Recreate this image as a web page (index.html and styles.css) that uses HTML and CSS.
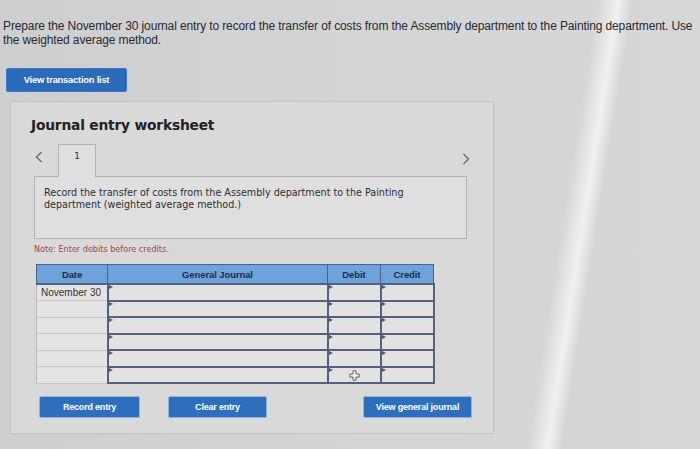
FILE: index.html
```html
<!DOCTYPE html>
<html lang="en">
<head>
<meta charset="utf-8">
<title>Journal entry worksheet</title>
<link rel="stylesheet" href="styles.css">
</head>
<body>
<p class="prompt">Prepare the November 30 journal entry to record the transfer of costs from the Assembly department to the Painting department. Use the weighted average method.</p>
<button class="btn btn-list">View transaction list</button>
<section class="panel">
  <h2 class="title">Journal entry worksheet</h2>
  <div class="tabs">
    <svg class="chev" width="8" height="12" viewBox="0 0 8 12"><path d="M6.5 1 L1.5 6 L6.5 11" fill="none" stroke="#6b6b6b" stroke-width="1.3"/></svg>
    <div class="tab">1</div>
    <svg class="chev chev-right" width="8" height="12" viewBox="0 0 8 12"><path d="M1.5 1 L6.5 6 L1.5 11" fill="none" stroke="#6b6b6b" stroke-width="1.3"/></svg>
  </div>
  <div class="desc">Record the transfer of costs from the Assembly department to the Painting department (weighted average method.)</div>
  <p class="note">Note: Enter debits before credits.</p>
  <table class="journal">
    <thead>
      <tr><th class="c-date">Date</th><th class="c-gj">General Journal</th><th class="c-dr">Debit</th><th class="c-cr">Credit</th></tr>
    </thead>
    <tbody>
      <tr><td class="date">November 30</td><td class="in"></td><td class="in"></td><td class="in"></td></tr>
      <tr><td class="date"></td><td class="in"></td><td class="in"></td><td class="in"></td></tr>
      <tr><td class="date"></td><td class="in"></td><td class="in"></td><td class="in"></td></tr>
      <tr><td class="date"></td><td class="in"></td><td class="in"></td><td class="in"></td></tr>
      <tr><td class="date"></td><td class="in"></td><td class="in"></td><td class="in"></td></tr>
      <tr><td class="date"></td><td class="in"></td><td class="in plus-cell"><svg class="plus" width="11" height="11" viewBox="0 0 11 11"><path d="M4 0.8 H7 V4 H10.2 V7 H7 V10.2 H4 V7 H0.8 V4 H4 Z" fill="#f2f2f2" stroke="#555" stroke-width="0.9"/></svg></td><td class="in"></td></tr>
    </tbody>
  </table>
  <div class="actions">
    <button class="btn btn-record">Record entry</button>
    <button class="btn btn-clear">Clear entry</button>
    <button class="btn btn-view">View general journal</button>
  </div>
</section>
</body>
</html>
```
FILE: styles.css
```css
html, body {
  margin: 0;
  padding: 0;
}
body {
  width: 700px;
  height: 449px;
  overflow: hidden;
  background-color: #d1d2d4;
  background-image:
    linear-gradient(99deg, rgba(255,255,255,0) 77.6%, rgba(238,238,238,0.75) 79.4%, rgba(246,246,246,0.85) 80.2%, rgba(255,255,255,0) 82%),
    linear-gradient(90deg, #cdced0 0%, #d4d5d7 60%, #d6d7d9 100%);
  font-family: "Liberation Sans", Arial, sans-serif;
  color: #2b2b2b;
}
.prompt {
  margin: 20px 0 0 3px;
  width: 694px;
  font-size: 12px;
  line-height: 13.5px;
  letter-spacing: -0.12px;
  color: #2a2a2a;
}
.btn {
  display: block;
  box-sizing: border-box;
  height: 22px;
  padding: 0;
  border: 1px solid #8fb2dc;
  border-radius: 2px;
  background: #2d6ebd;
  color: #fff;
  font-family: "Liberation Sans", Arial, sans-serif;
  font-weight: bold;
  font-size: 9px;
  letter-spacing: -0.2px;
  text-align: center;
}
.btn-list {
  margin: 21px 0 0 6px;
  width: 121px;
  height: 24px;
  border-color: #3a78c4;
  background: #2b6bb9;
  font-size: 9.3px;
}
.panel {
  margin: 9px 0 0 10px;
  width: 484px;
  height: 333px;
  box-sizing: border-box;
  border: 1px solid #c2c2c4;
  background: #d9d9da;
  padding: 0 0 0 23px;
  font-family: "DejaVu Sans", Verdana, sans-serif;
}
.title {
  margin: 14px 0 0 -3px;
  font-size: 13.8px;
  line-height: 18px;
  font-weight: bold;
  color: #222;
  letter-spacing: -0.2px;
}
.tabs {
  margin-top: 10px;
  width: 433px;
  height: 32px;
  display: flex;
  align-items: flex-start;
}
.chev {
  margin: 7px 0 0 1px;
}
.chev-right {
  margin: 9px -3px 0 auto;
}
.tab {
  position: relative;
  z-index: 1;
  margin-left: 15px;
  box-sizing: border-box;
  width: 38px;
  height: 33px;
  border: 1px solid #b3b3b3;
  border-bottom: none;
  background: #dfdfe0;
  text-align: center;
  font-size: 9px;
  line-height: 12px;
  padding-top: 5px;
  color: #333;
}
.desc {
  box-sizing: border-box;
  width: 433px;
  height: 63px;
  border: 1px solid #b3b3b3;
  background: #dfdfe0;
  padding: 10px 9px;
  font-size: 9.6px;
  line-height: 12px;
  color: #2e2e2e;
}
.note {
  margin: 5px 0 0 0;
  font-size: 8.1px;
  line-height: 10px;
  color: #9a4a44;
}
.journal {
  margin: 10px 0 0 2px;
  width: 393px;
  border-collapse: collapse;
  table-layout: fixed;
  font-family: "Liberation Sans", Arial, sans-serif;
}
.journal th {
  height: 18px;
  padding: 0;
  background: #6ea2da;
  border: 1px solid #51617f;
  border-bottom: 2px solid #51617f;
  font-size: 9.5px;
  font-weight: bold;
  color: #1d2d4b;
  letter-spacing: -0.1px;
}
.c-date { width: 70px; }
.c-gj { width: 219px; }
.c-dr { width: 52px; }
.c-cr { width: 52px; }
.journal td {
  height: 14.5px;
  padding: 0;
}
.journal td.date {
  border: 1px solid #c6c6c8;
  border-left-color: #b8b8ba;
  background: #e4e4e5;
  font-size: 10px;
  color: #333;
  padding-left: 4px;
  white-space: nowrap;
}
.journal td.in {
  position: relative;
  border: 2px solid #52617d;
  background: #e2e2e3;
}
.journal td.in::before {
  content: "";
  position: absolute;
  left: 0;
  top: 0;
  border-top: 2.5px solid transparent;
  border-bottom: 2.5px solid transparent;
  border-left: 4px solid #4a5a78;
}
.plus-cell {
  text-align: center;
  vertical-align: middle;
}
.plus {
  display: block;
  margin: 1px auto 0;
}
.actions {
  margin-top: 12px;
  display: flex;
}
.btn-record {
  margin-left: 5px;
  width: 101px;
}
.btn-clear {
  margin-left: 28px;
  width: 99px;
}
.btn-view {
  margin-left: 96px;
  width: 109px;
}
```
